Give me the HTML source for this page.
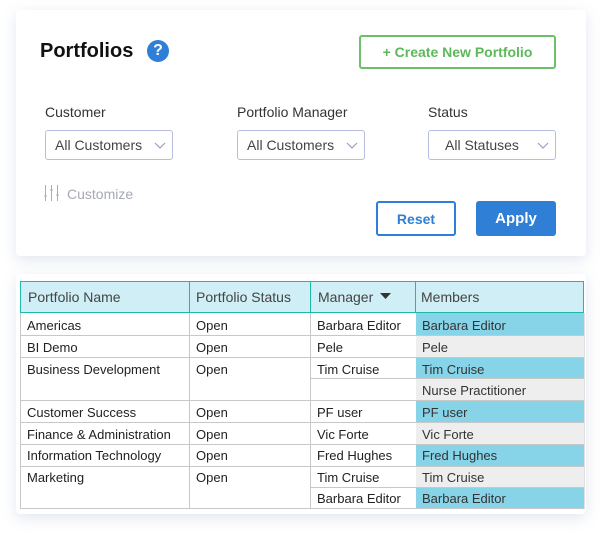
<!DOCTYPE html>
<html><head><meta charset="utf-8"><style>
*{margin:0;padding:0;box-sizing:border-box}
body{width:601px;height:533px;background:#fff;position:relative;overflow:hidden;font-family:"Liberation Sans",sans-serif;}
.a{position:absolute}
.card{position:absolute;background:#fff;border-radius:4px;box-shadow:0 4px 14px rgba(120,140,180,0.22)}
.lbl{position:absolute;font-size:14px;color:#333}
.sel{position:absolute;width:128px;height:30px;border:1px solid #b9bde0;border-radius:3px;font-size:14px;color:#444;line-height:29px;padding-left:9px}
.sel svg{position:absolute;right:6px;top:11px}
.c{position:absolute;font-size:13px;color:#222;line-height:22px;padding-left:6px;white-space:nowrap;overflow:hidden}
.hl{position:absolute;background:#c8c8c8}
</style></head><body>
<div class="card" style="left:16px;top:10px;width:570px;height:246px"></div>
<div class="a" style="left:40px;top:40px;font-size:20px;font-weight:bold;color:#111">Portfolios</div>
<div class="a" style="left:147px;top:40px;width:22px;height:22px;border-radius:50%;background:#2f7fd6;color:#fff;font-weight:bold;font-size:16px;text-align:center;line-height:22px">?</div>
<div class="a" style="left:359px;top:35px;width:197px;height:34px;border:2px solid #6cc06a;border-radius:3px;color:#5cb85a;font-weight:bold;font-size:14px;text-align:center;line-height:31px">+ Create New Portfolio</div>
<div class="lbl" style="left:45px;top:104px">Customer</div>
<div class="lbl" style="left:237px;top:104px">Portfolio Manager</div>
<div class="lbl" style="left:428px;top:104px">Status</div>
<div class="sel" style="left:45px;top:130px">All Customers<svg width="12" height="8"><path d="M1 1l5 5 5-5" fill="none" stroke="#9aa0c0" stroke-width="1.2"/></svg></div>
<div class="sel" style="left:237px;top:130px">All Customers<svg width="12" height="8"><path d="M1 1l5 5 5-5" fill="none" stroke="#9aa0c0" stroke-width="1.2"/></svg></div>
<div class="sel" style="left:428px;top:130px;padding-left:16px">All Statuses<svg width="12" height="8"><path d="M1 1l5 5 5-5" fill="none" stroke="#9aa0c0" stroke-width="1.2"/></svg></div>
<svg class="a" style="left:44px;top:185px" width="16" height="16"><g stroke="#a8acc0" stroke-width="1"><path d="M1.5 0v16M7.5 0v16M13.5 0v16"/><path d="M0 11h3M6 5h3M12 10h3"/></g></svg>
<div class="a" style="left:67px;top:186px;font-size:14px;color:#a6a9b6">Customize</div>
<div class="a" style="left:376px;top:201px;width:80px;height:35px;border:2px solid #2f7fd6;border-radius:3px;color:#2f7fd6;font-weight:bold;font-size:14px;text-align:center;line-height:32px">Reset</div>
<div class="a" style="left:476px;top:201px;width:80px;height:35px;background:#2f7fd6;border-radius:3px;color:#fff;font-weight:bold;font-size:15px;text-align:center;line-height:36px">Apply</div>

<div class="card" style="left:16px;top:274px;width:570px;height:240px"></div>
<div class="a" style="left:20px;top:281px;width:564px;height:32px;background:#d0eef5;border:1px solid #20b8a8"></div>
<div class="a" style="left:189px;top:281px;width:1px;height:32px;background:#20b8a8"></div>
<div class="a" style="left:310px;top:281px;width:1px;height:32px;background:#20b8a8"></div>
<div class="a" style="left:415px;top:281px;width:1px;height:32px;background:#20b8a8"></div>
<div class="c" style="left:22px;top:286px;font-size:14px;color:#444">Portfolio Name</div>
<div class="c" style="left:190px;top:286px;font-size:14px;color:#444">Portfolio Status</div>
<div class="c" style="left:312px;top:286px;font-size:14px;color:#444">Manager <svg width="11" height="7" style="margin-left:3px;vertical-align:2px"><path d="M0 0h11L5.5 6z" fill="#333"/></svg></div>
<div class="c" style="left:415px;top:286px;font-size:14px;color:#444">Members</div>
<div class="a" style="left:416px;top:313px;width:168px;height:22px;background:#87d3e8"></div>
<div class="a" style="left:416px;top:336px;width:168px;height:21px;background:#eeeeee"></div>
<div class="a" style="left:416px;top:358px;width:168px;height:20px;background:#87d3e8"></div>
<div class="a" style="left:416px;top:379px;width:168px;height:21px;background:#eeeeee"></div>
<div class="a" style="left:416px;top:401px;width:168px;height:21px;background:#87d3e8"></div>
<div class="a" style="left:416px;top:423px;width:168px;height:21px;background:#eeeeee"></div>
<div class="a" style="left:416px;top:445px;width:168px;height:21px;background:#87d3e8"></div>
<div class="a" style="left:416px;top:467px;width:168px;height:20px;background:#eeeeee"></div>
<div class="a" style="left:416px;top:488px;width:168px;height:20px;background:#87d3e8"></div>
<div class="hl" style="left:20px;top:313px;width:1px;height:196px"></div>
<div class="hl" style="left:189px;top:313px;width:1px;height:196px"></div>
<div class="hl" style="left:310px;top:313px;width:1px;height:196px"></div>
<div class="hl" style="left:584px;top:313px;width:1px;height:196px;background:#e0e0e0"></div>
<div class="hl" style="left:20px;top:335px;width:564px;height:1px"></div>
<div class="hl" style="left:20px;top:357px;width:564px;height:1px"></div>
<div class="hl" style="left:310px;top:378px;width:274px;height:1px"></div>
<div class="hl" style="left:20px;top:400px;width:564px;height:1px"></div>
<div class="hl" style="left:20px;top:422px;width:564px;height:1px"></div>
<div class="hl" style="left:20px;top:444px;width:564px;height:1px"></div>
<div class="hl" style="left:20px;top:466px;width:564px;height:1px"></div>
<div class="hl" style="left:310px;top:487px;width:274px;height:1px"></div>
<div class="hl" style="left:20px;top:508px;width:564px;height:1px"></div>
<div class="c" style="left:21px;top:315px">Americas</div><div class="c" style="left:190px;top:315px">Open</div><div class="c" style="left:311px;top:315px">Barbara Editor</div><div class="c" style="left:416px;top:315px;color:#333">Barbara Editor</div>
<div class="c" style="left:21px;top:337px">BI Demo</div><div class="c" style="left:190px;top:337px">Open</div><div class="c" style="left:311px;top:337px">Pele</div><div class="c" style="left:416px;top:337px;color:#333">Pele</div>
<div class="c" style="left:21px;top:359px">Business Development</div><div class="c" style="left:190px;top:359px">Open</div><div class="c" style="left:311px;top:359px">Tim Cruise</div><div class="c" style="left:416px;top:359px;color:#333">Tim Cruise</div>
<div class="c" style="left:416px;top:380px;color:#333">Nurse Practitioner</div>
<div class="c" style="left:21px;top:402px">Customer Success</div><div class="c" style="left:190px;top:402px">Open</div><div class="c" style="left:311px;top:402px">PF user</div><div class="c" style="left:416px;top:402px;color:#333">PF user</div>
<div class="c" style="left:21px;top:424px">Finance &amp; Administration</div><div class="c" style="left:190px;top:424px">Open</div><div class="c" style="left:311px;top:424px">Vic Forte</div><div class="c" style="left:416px;top:424px;color:#333">Vic Forte</div>
<div class="c" style="left:21px;top:445px">Information Technology</div><div class="c" style="left:190px;top:445px">Open</div><div class="c" style="left:311px;top:445px">Fred Hughes</div><div class="c" style="left:416px;top:445px;color:#333">Fred Hughes</div>
<div class="c" style="left:21px;top:467px">Marketing</div><div class="c" style="left:190px;top:467px">Open</div><div class="c" style="left:311px;top:467px">Tim Cruise</div><div class="c" style="left:416px;top:467px;color:#333">Tim Cruise</div>
<div class="c" style="left:311px;top:488px">Barbara Editor</div><div class="c" style="left:416px;top:488px;color:#333">Barbara Editor</div>
</body></html>
